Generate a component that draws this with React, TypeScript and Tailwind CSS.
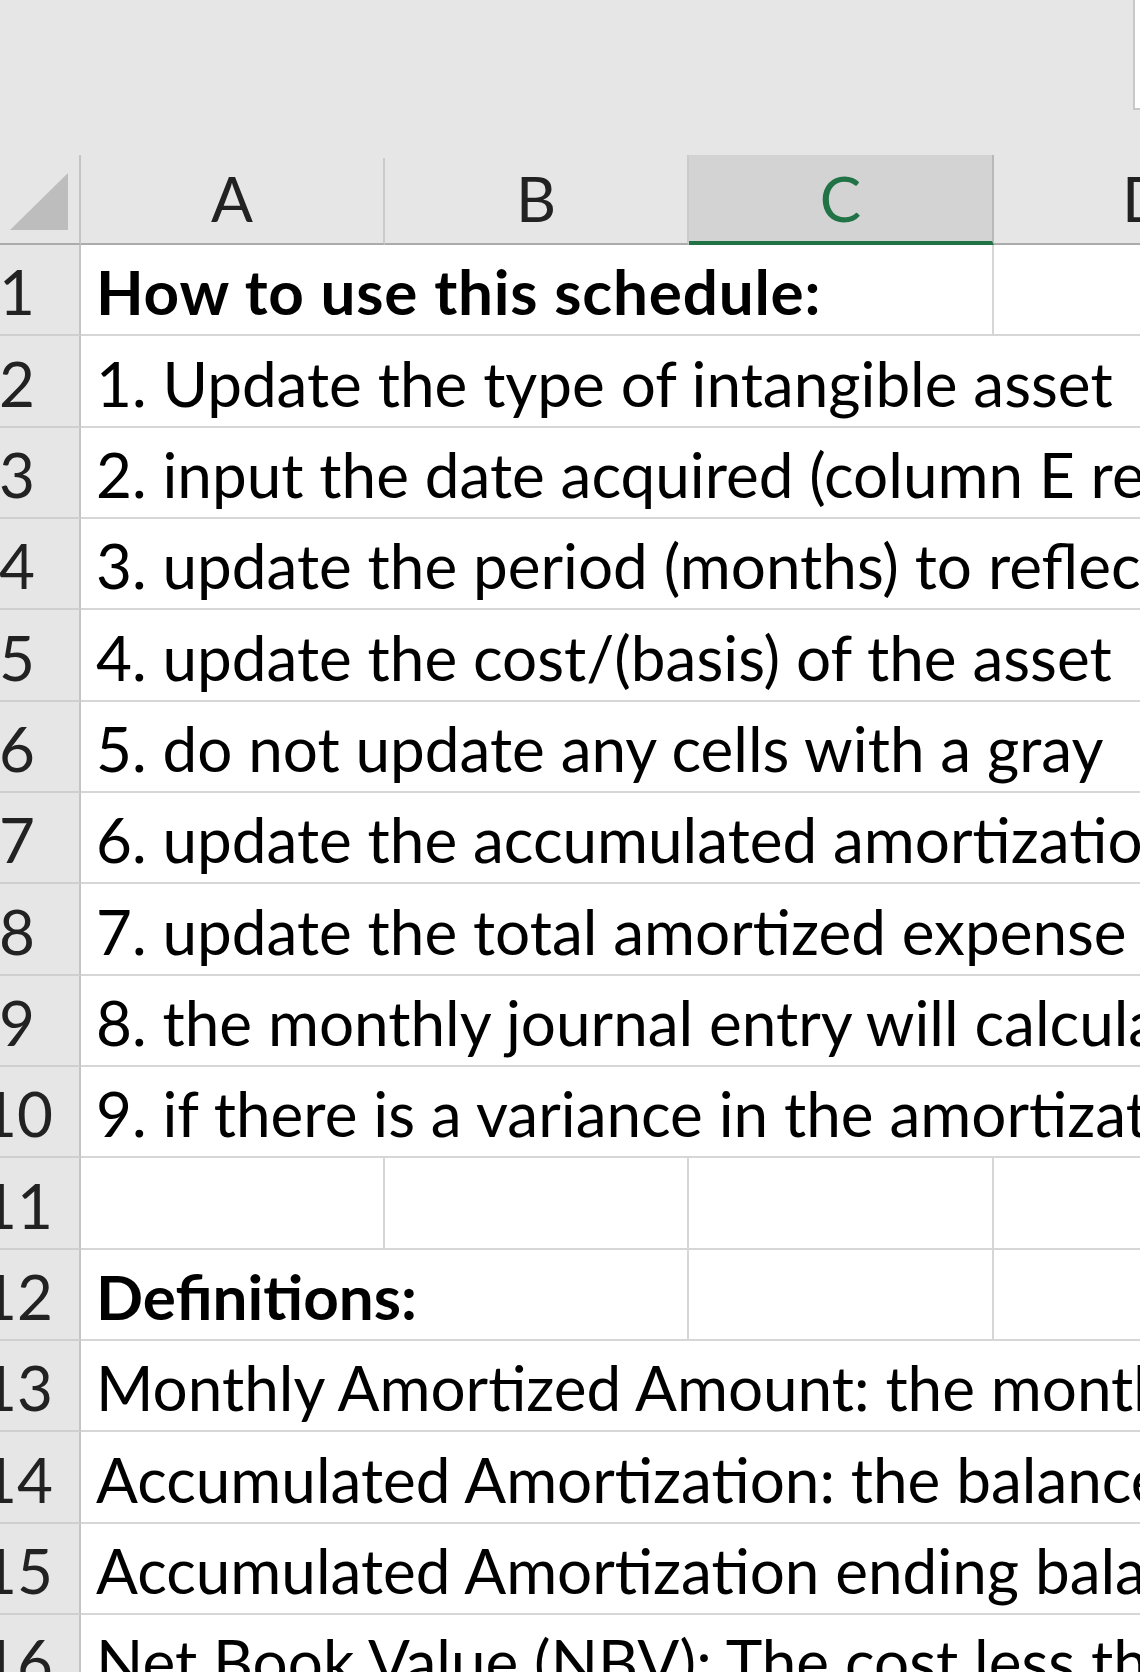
import React from "react";

const font = { fontFamily: "Lato, 'Open Sans', sans-serif" };

const rows: { n: number; text?: string; bold?: boolean; kind?: string }[] = [
  { n: 1, text: "How to use this schedule:", bold: true, kind: "title" },
  { n: 2, text: "1. Update the type of intangible asset" },
  { n: 3, text: "2. input the date acquired (column E reflects" },
  { n: 4, text: "3. update the period (months) to reflect" },
  { n: 5, text: "4. update the cost/(basis) of the asset" },
  { n: 6, text: "5. do not update any cells with a gray" },
  { n: 7, text: "6. update the accumulated amortization" },
  { n: 8, text: "7. update the total amortized expense" },
  { n: 9, text: "8. the monthly journal entry will calculate" },
  { n: 10, text: "9. if there is a variance in the amortization" },
  { n: 11, kind: "empty" },
  { n: 12, text: "Definitions:", bold: true, kind: "defs" },
  { n: 13, text: "Monthly Amortized Amount: the monthly" },
  { n: 14, text: "Accumulated Amortization: the balance" },
  { n: 15, text: "Accumulated Amortization ending balance" },
  { n: 16, text: "Net Book Value (NBV): The cost less the" },
];

const RowHead = ({ n }: { n: number }) => (
  <div className="w-[126px] shrink-0 flex items-end justify-center pb-[12px] bg-[#e6e6e6] border-r-2 border-b-2 border-r-[#c4c4c4] border-b-[#cfcfcf] text-[62px] leading-none text-[#222]">
    {n}
  </div>
);

const Cell = ({ w, children, last }: { w?: string; children?: React.ReactNode; last?: boolean }) => (
  <div
    className={`${w ?? ""} ${last ? "flex-1" : "shrink-0 border-r-2 border-r-[#d6d6d6]"} flex items-end pb-[12px] pl-[15px] whitespace-nowrap`}
  >
    {children}
  </div>
);

export default function App() {
  return (
    <div className="w-[1140px] h-[1672px] overflow-hidden bg-white text-black" style={font}>
      {/* ribbon remnant */}
      <div className="h-[155px] bg-[#e6e6e6] flex justify-end">
        <div className="w-[7px] h-[110px] bg-white border-l-2 border-b-2 border-[#c8c8c8]"></div>
      </div>

      <div className="ml-[-45px]">
        {/* column headers */}
        <div className="h-[90px] flex bg-[#e6e6e6] text-[62px] leading-none text-[#222]">
          <div className="w-[126px] shrink-0 flex justify-end items-end pr-[11px] pb-[13px] border-r-2 border-b-2 border-r-[#c4c4c4] border-b-[#ababab]">
            <svg width="58" height="57" viewBox="0 0 58 57">
              <polygon points="58,0 58,57 0,57" fill="#bdbdbd" />
            </svg>
          </div>
          <div className="w-[304px] shrink-0 flex items-end justify-center pb-[14px] border-r-2 border-b-2 border-r-[#cbcbcb] border-b-[#ababab] mt-[3px]">A</div>
          <div className="w-[304px] shrink-0 flex items-end justify-center pb-[14px] border-r-2 border-b-2 border-r-[#cbcbcb] border-b-[#ababab]">B</div>
          <div className="w-[305px] shrink-0 flex items-end justify-center pb-[12px] bg-[#d3d3d3] border-r-2 border-r-[#b8b8b8] border-b-4 border-b-[#217346] text-[#217346]">C</div>
          <div className="flex-1 flex items-end pl-[128px] pb-[14px] border-b-2 border-b-[#ababab]">D</div>
        </div>

        {rows.map((r) => (
          <div key={r.n} className="h-[91.33px] flex text-[62px] leading-none">
            <RowHead n={r.n} />
            <div className="flex-1 flex border-b-2 border-[#d6d6d6]">
              {r.kind === "title" && (
                <>
                  <Cell w="w-[913px]">
                    <span className="font-bold tracking-[0.8px]">{r.text}</span>
                  </Cell>
                  <Cell last />
                </>
              )}
              {r.kind === "empty" && (
                <>
                  <Cell w="w-[304px]" />
                  <Cell w="w-[304px]" />
                  <Cell w="w-[305px]" />
                  <Cell last />
                </>
              )}
              {r.kind === "defs" && (
                <>
                  <Cell w="w-[608px]">
                    <span className="font-bold">{r.text}</span>
                  </Cell>
                  <Cell w="w-[305px]" />
                  <Cell last />
                </>
              )}
              {!r.kind && (
                <Cell last>
                  <span>{r.text}</span>
                </Cell>
              )}
            </div>
          </div>
        ))}
      </div>
    </div>
  );
}
